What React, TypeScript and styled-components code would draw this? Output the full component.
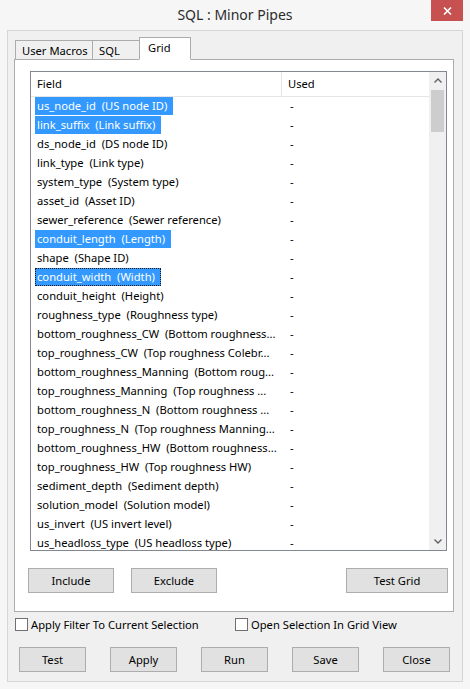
import React from 'react';
import styled, { createGlobalStyle } from 'styled-components';

const GlobalStyle = createGlobalStyle`
  html, body {
    margin: 0;
    padding: 0;
    background: #f6f6f6;
  }
  * {
    box-sizing: border-box;
  }
`;

const FONT = `"Noto Sans", "Open Sans", sans-serif`;

// Ventana
const Window = styled.div`
  width: 470px;
  height: 689px;
  background: #f6f6f6;
  display: flex;
  flex-direction: column;
  font-family: ${FONT};
  font-size: 11.2px;
  color: #000;
  overflow: hidden;
`;

const TitleBar = styled.div`
  height: 30px;
  display: grid;
  grid-template-columns: 1fr auto 1fr;
  align-items: start;
`;

const Title = styled.div`
  grid-column: 2;
  font-size: 14px;
  color: #2b2b2b;
  padding-top: 5px;
`;

const CloseButton = styled.div`
  grid-column: 3;
  justify-self: end;
  width: 32px;
  height: 21px;
  margin-right: 7px;
  background: #c75050;
  display: flex;
  align-items: center;
  justify-content: center;
`;

const Client = styled.div`
  flex: 1;
  margin: 0 7px 7px 7px;
  border: 1px solid #d6d6d6;
  background: #f0f0f0;
  display: flex;
  flex-direction: column;
  padding: 7px 8px 0 6px;
`;

const TabStrip = styled.div`
  display: flex;
  align-items: flex-end;
  height: 22px;
  padding-left: 1px;
  position: relative;
  z-index: 1;
  margin-bottom: -1px;
`;

const Tab = styled.div<{ $active?: boolean; $width: number }>`
  width: ${p => p.$width}px;
  height: ${p => (p.$active ? '23px' : '20px')};
  padding: ${p => (p.$active ? '1px 0 0 8px' : '1px 0 0 6px')};
  border: 1px solid #acacac;
  border-bottom: ${p => (p.$active ? '1px solid #fff' : '1px solid #acacac')};
  margin-left: -1px;
  background: ${p => (p.$active ? '#fff' : '#f0f0f0')};
  line-height: 17px;
  white-space: nowrap;

  &:first-child {
    margin-left: 0;
  }
`;

const TabPanel = styled.div`
  height: 553px;
  border: 1px solid #acacac;
  background: #fff;
  display: flex;
  flex-direction: column;
  padding: 11px 6px 0 15px;
`;

// Lista
const ListBox = styled.div`
  height: 480px;
  border: 1px solid #828790;
  display: flex;
  background: #fff;
`;

const ListBody = styled.div`
  flex: 1;
  display: flex;
  flex-direction: column;
  overflow: hidden;
`;

const HeaderRow = styled.div`
  height: 25px;
  display: grid;
  grid-template-columns: 251px 1fr;
  border-bottom: 1px solid #e5e5e5;
  flex-shrink: 0;
`;

const HeaderCell = styled.div<{ $divider?: boolean }>`
  padding: 4px 0 0 6px;
  border-right: ${p => (p.$divider ? '1px solid #e5e5e5' : 'none')};
`;

const Row = styled.div`
  height: 19px;
  display: grid;
  grid-template-columns: 251px 1fr;
  align-items: start;
  flex-shrink: 0;
`;

const FieldCell = styled.div`
  padding-left: 4px;
  overflow: hidden;
`;

const FieldText = styled.span<{ $selected?: boolean; $focus?: boolean }>`
  display: inline-block;
  height: 18px;
  line-height: 17px;
  padding: 0 6px 0 2px;
  white-space: pre;
  background: ${p => (p.$selected ? '#3399ff' : 'transparent')};
  color: ${p => (p.$selected ? '#fff' : '#000')};
  outline: ${p => (p.$focus ? '1px dotted #1a1a1a' : 'none')};
  outline-offset: -1px;
`;

const UsedCell = styled.div`
  padding-left: 8px;
  line-height: 17px;
`;

const ScrollBar = styled.div`
  width: 17px;
  background: #f0f0f0;
  display: flex;
  flex-direction: column;
  flex-shrink: 0;
`;

const ScrollArrow = styled.div`
  height: 17px;
  display: flex;
  align-items: center;
  justify-content: center;
`;

const ScrollTrack = styled.div`
  flex: 1;
  padding: 1px 2px;
`;

const ScrollThumb = styled.div`
  height: 42px;
  background: #cdcdcd;
`;

// Botones
const ButtonRow = styled.div`
  display: flex;
  gap: 17px;
  margin: 17px -1px 0 -2px;
`;

const Button = styled.div<{ $width: number }>`
  width: ${p => p.$width}px;
  height: 25px;
  border: 1px solid #adadad;
  background: #e1e1e1;
  display: flex;
  align-items: center;
  justify-content: center;
  padding-bottom: 1px;
`;

const Spacer = styled.div`
  flex: 1;
`;

const OptionsRow = styled.div`
  display: grid;
  grid-template-columns: 220px 1fr;
  padding: 4px 0 0 1px;
  height: 29px;
`;

const CheckOption = styled.label`
  display: flex;
  align-items: center;
  gap: 3px;
  height: 17px;
`;

const CheckBox = styled.span`
  width: 13px;
  height: 13px;
  border: 1px solid #707070;
  background: #fff;
  flex-shrink: 0;
`;

const FooterRow = styled.div`
  display: flex;
  gap: 24px;
  padding: 6px 0 0 5px;
`;

const fields: { name: string; selected?: boolean; focus?: boolean }[] = [
  { name: 'us_node_id  (US node ID)', selected: true },
  { name: 'link_suffix  (Link suffix)', selected: true },
  { name: 'ds_node_id  (DS node ID)' },
  { name: 'link_type  (Link type)' },
  { name: 'system_type  (System type)' },
  { name: 'asset_id  (Asset ID)' },
  { name: 'sewer_reference  (Sewer reference)' },
  { name: 'conduit_length  (Length)', selected: true },
  { name: 'shape  (Shape ID)' },
  { name: 'conduit_width  (Width)', selected: true, focus: true },
  { name: 'conduit_height  (Height)' },
  { name: 'roughness_type  (Roughness type)' },
  { name: 'bottom_roughness_CW  (Bottom roughness...' },
  { name: 'top_roughness_CW  (Top roughness Colebr...' },
  { name: 'bottom_roughness_Manning  (Bottom roug...' },
  { name: 'top_roughness_Manning  (Top roughness ...' },
  { name: 'bottom_roughness_N  (Bottom roughness ...' },
  { name: 'top_roughness_N  (Top roughness Manning...' },
  { name: 'bottom_roughness_HW  (Bottom roughness...' },
  { name: 'top_roughness_HW  (Top roughness HW)' },
  { name: 'sediment_depth  (Sediment depth)' },
  { name: 'solution_model  (Solution model)' },
  { name: 'us_invert  (US invert level)' },
  { name: 'us_headloss_type  (US headloss type)' },
];

const Chevron: React.FC<{ up?: boolean }> = ({ up }) => (
  <svg width="8" height="5" viewBox="0 0 8 5">
    <path
      d={up ? 'M0.5 4.5 L4 1 L7.5 4.5' : 'M0.5 0.5 L4 4 L7.5 0.5'}
      fill="none"
      stroke="#606060"
      strokeWidth="1.4"
    />
  </svg>
);

const App: React.FC = () => {
  return (
    <>
      <GlobalStyle />
      <Window>
        <TitleBar>
          <Title>SQL : Minor Pipes</Title>
          <CloseButton>
            <svg width="9" height="8" viewBox="0 0 9 8">
              <path d="M1 0.5 L8 7.5 M8 0.5 L1 7.5" stroke="#fff" strokeWidth="1.6" />
            </svg>
          </CloseButton>
        </TitleBar>

        <Client>
          <TabStrip>
            <Tab $width={78}>User Macros</Tab>
            <Tab $width={48}>SQL</Tab>
            <Tab $width={52} $active>Grid</Tab>
          </TabStrip>

          <TabPanel>
            <ListBox>
              <ListBody>
                <HeaderRow>
                  <HeaderCell $divider>Field</HeaderCell>
                  <HeaderCell>Used</HeaderCell>
                </HeaderRow>
                {fields.map(f => (
                  <Row key={f.name}>
                    <FieldCell>
                      <FieldText $selected={f.selected} $focus={f.focus}>
                        {f.name}
                      </FieldText>
                    </FieldCell>
                    <UsedCell>-</UsedCell>
                  </Row>
                ))}
              </ListBody>
              <ScrollBar>
                <ScrollArrow>
                  <Chevron up />
                </ScrollArrow>
                <ScrollTrack>
                  <ScrollThumb />
                </ScrollTrack>
                <ScrollArrow>
                  <Chevron />
                </ScrollArrow>
              </ScrollBar>
            </ListBox>

            <ButtonRow>
              <Button $width={86}>Include</Button>
              <Button $width={86}>Exclude</Button>
              <Spacer />
              <Button $width={102}>Test Grid</Button>
            </ButtonRow>
          </TabPanel>

          <OptionsRow>
            <CheckOption>
              <CheckBox />
              Apply Filter To Current Selection
            </CheckOption>
            <CheckOption>
              <CheckBox />
              Open Selection In Grid View
            </CheckOption>
          </OptionsRow>

          <FooterRow>
            <Button $width={67}>Test</Button>
            <Button $width={67}>Apply</Button>
            <Button $width={67}>Run</Button>
            <Button $width={67}>Save</Button>
            <Button $width={67}>Close</Button>
          </FooterRow>
        </Client>
      </Window>
    </>
  );
};

export default App;
